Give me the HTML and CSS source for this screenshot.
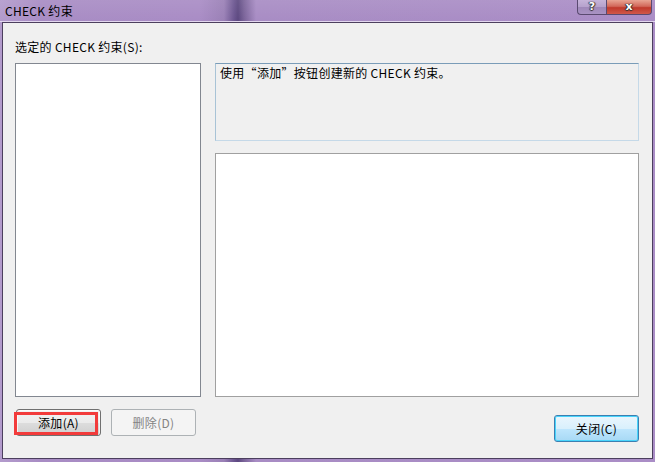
FILE: index.html
```html
<!DOCTYPE html>
<html lang="zh-CN">
<head>
<meta charset="utf-8">
<title>CHECK 约束</title>
<link rel="stylesheet" href="styles.css">
</head>
<body>
<div class="window">
  <div class="titlebar">
    <span class="title">CHECK 约束</span>
    <div class="caption-buttons">
      <div class="cap-btn help">?</div>
      <div class="cap-btn close">x</div>
    </div>
  </div>
  <div class="client">
    <div class="label">选定的 CHECK 约束(S):</div>
    <div class="main">
      <div class="list"></div>
      <div class="right">
        <div class="desc">使用“添加”按钮创建新的 CHECK 约束。</div>
        <div class="props"></div>
      </div>
    </div>
    <div class="footer">
      <div class="btn-wrap">
        <button class="btn">添加(A)</button>
        <span class="highlight"></span>
      </div>
      <button class="btn disabled">删除(D)</button>
      <button class="btn default">关闭(C)</button>
    </div>
  </div>
</div>
</body>
</html>
```
FILE: styles.css
```css
html, body {
  margin: 0;
  padding: 0;
}
body {
  width: 655px;
  height: 462px;
  overflow: hidden;
  background: #a88cc4;
  font-family: "Noto Sans CJK SC", "Microsoft YaHei", sans-serif;
  font-size: 12px;
  letter-spacing: 0.3px;
  color: #000;
}
.window {
  width: 655px;
  height: 462px;
  display: flex;
  flex-direction: column;
  background: linear-gradient(90deg, #b39bcc 0, #a88cc4 40px, #a98cc5 200px, #9a80b6 224px, #6b5590 234px, #5c4880 238px, #7a6399 244px, #a88cc4 256px, #aa8dc6 100%);
}
.titlebar {
  height: 22px;
  border-bottom: 1px solid #e2d6ee;
  display: flex;
  align-items: flex-start;
  background: linear-gradient(180deg, rgba(255,255,255,0.08), rgba(255,255,255,0));
}
.title {
  margin: 3px 0 0 5px;
  line-height: 16px;
  font-size: 12px;
}
.caption-buttons {
  margin-left: auto;
  margin-right: 3px;
  display: flex;
  height: 15px;
}
.cap-btn {
  height: 15px;
  box-sizing: border-box;
  border: 1px solid #5a4a70;
  border-top: none;
  font-family: "DejaVu Sans", sans-serif;
  font-weight: bold;
  font-size: 11px;
  line-height: 14px;
  letter-spacing: 0;
  text-align: center;
  color: #fff;
  text-shadow: 0 0 1px #333, 1px 0 1px #333, -1px 0 1px #333, 0 1px 1px #333;
}
.help {
  width: 29px;
  border-radius: 0 0 0 4px;
  border-right: none;
  background: linear-gradient(180deg, #c6b4d9 0, #b5a1cc 50%, #9f88b9 51%, #a993c3 100%);
}
.close {
  width: 46px;
  border-radius: 0 0 4px 0;
  background: linear-gradient(180deg, #e8a493 0, #d2685a 45%, #c0392b 55%, #d0584a 100%);
}
.client {
  margin: 0 2px 3px 2px;
  height: 434px;
  border: 1px solid #4c3f5e;
  background: #f0f0f0;
  padding: 16px 13px 0 12px;
  display: flex;
  flex-direction: column;
}
.label {
  line-height: 16px;
}
.main {
  margin-top: 8px;
  height: 334px;
  display: flex;
  gap: 14px;
}
.list {
  width: 186px;
  box-sizing: border-box;
  border: 1px solid #828790;
  background: #fff;
}
.right {
  flex: 1;
  display: flex;
  flex-direction: column;
  gap: 12px;
}
.desc {
  height: 78px;
  box-sizing: border-box;
  border: 1px solid;
  border-color: #7a9cb8 #c5d9e8 #c5d9e8 #a8c3d6;
  background: #f0f0f0;
  padding: 1px 4px;
  line-height: 16px;
}
.props {
  flex: 1;
  border: 1px solid #a0a0a0;
  background: #fff;
}
.footer {
  margin-top: 12px;
  display: flex;
  align-items: flex-start;
  gap: 10px;
}
.btn-wrap {
  position: relative;
  margin-left: 1px;
}
.btn {
  width: 85px;
  height: 27px;
  box-sizing: border-box;
  border: 1px solid #707070;
  border-radius: 3px;
  background: linear-gradient(180deg, #f2f2f2 0, #ebebeb 50%, #dddddd 51%, #cfcfcf 100%);
  box-shadow: inset 0 0 0 1px rgba(255,255,255,0.7);
  font-family: "Noto Sans CJK SC", "Microsoft YaHei", sans-serif;
  font-size: 12px;
  letter-spacing: 0.3px;
  color: #000;
  padding: 0;
  display: block;
}
.btn.disabled {
  border-color: #adb2b5;
  background: #f4f4f4;
  box-shadow: none;
  color: #838383;
}
.btn.default {
  margin-left: auto;
  margin-top: 6px;
  border-color: #3c7fb1;
  background: linear-gradient(180deg, #eaf6fd 0, #d9f0fc 50%, #bee6fd 51%, #a7d9f5 100%);
  box-shadow: inset 0 0 0 1px #48d4fb;
}
.highlight {
  position: absolute;
  left: -2px;
  top: 3px;
  width: 84px;
  height: 23px;
  box-sizing: border-box;
  border: 3px solid #f23b3b;
  pointer-events: none;
}
```
